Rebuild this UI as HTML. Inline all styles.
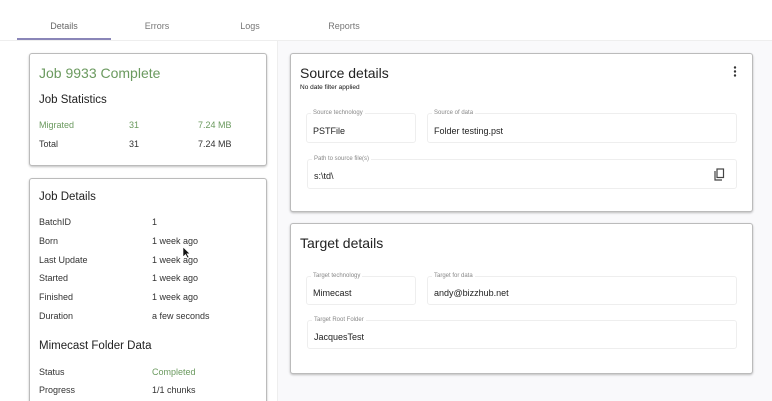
<!DOCTYPE html><html><head><style>
*{box-sizing:border-box;margin:0;padding:0}
html,body{width:772px;height:401px;overflow:hidden}
body{background:#fff;font-family:"Liberation Sans",sans-serif;color:#222;position:relative}
.a{position:absolute}
.tab{position:absolute;top:20px;font-size:9px;color:#777;text-align:center;width:94px}
.card{position:absolute;background:#fff;border:1px solid #bbb;border-radius:3px;box-shadow:0 1px 2px rgba(0,0,0,.25)}
.t{position:absolute;font-size:9px;color:#333}
.f{position:absolute;border:1px solid #eee;border-radius:3px;background:#fff}
.f .l{position:absolute;top:-4px;left:4px;font-size:6px;color:#888;background:#fff;padding:0 2px}
.f .v{position:absolute;left:6px;font-size:9px;color:#222}
</style></head><body>
<div class="a" style="left:278px;top:41px;width:494px;height:360px;background:#f9f9fb"></div>
<div class="a" style="left:0;top:40px;width:772px;height:1px;background:#eee"></div>
<div class="a" style="left:277px;top:41px;width:1px;height:360px;background:#eee"></div>
<div class="tab" style="left:17px;top:21px;color:#666">Details</div>
<div class="tab" style="left:110px;top:21px">Errors</div>
<div class="tab" style="left:203px;top:21px">Logs</div>
<div class="tab" style="left:297px;top:21px">Reports</div>
<div class="a" style="left:17px;top:38px;width:94px;height:2px;background:#8a86b8"></div>

<div class="card" style="left:29px;top:53px;width:238px;height:113px">
<div class="a" style="left:9px;top:11px;font-size:14px;color:#6b9a5f">Job 9933 Complete</div>
<div class="a" style="left:9px;top:40px;font-size:11.5px;color:#222">Job Statistics</div>
<div class="t" style="left:9px;top:66px;color:#6b9a5f">Migrated</div><div class="t" style="left:99px;top:66px;color:#6b9a5f">31</div><div class="t" style="left:168px;top:66px;color:#6b9a5f">7.24 MB</div>
<div class="t" style="left:9px;top:85px">Total</div><div class="t" style="left:99px;top:85px">31</div><div class="t" style="left:168px;top:85px">7.24 MB</div>
</div>

<div class="card" style="left:29px;top:178px;width:238px;height:240px">
<div class="a" style="left:9px;top:12px;font-size:11.5px">Job Details</div>
<div class="t" style="left:9px;top:38px">BatchID</div><div class="t" style="left:122px;top:38px">1</div>
<div class="t" style="left:9px;top:57px">Born</div><div class="t" style="left:122px;top:57px">1 week ago</div>
<div class="t" style="left:9px;top:76px">Last Update</div><div class="t" style="left:122px;top:76px">1 week ago</div>
<div class="t" style="left:9px;top:94px">Started</div><div class="t" style="left:122px;top:94px">1 week ago</div>
<div class="t" style="left:9px;top:113px">Finished</div><div class="t" style="left:122px;top:113px">1 week ago</div>
<div class="t" style="left:9px;top:132px">Duration</div><div class="t" style="left:122px;top:132px">a few seconds</div>
<div class="a" style="left:9px;top:161px;font-size:11.5px">Mimecast Folder Data</div>
<div class="t" style="left:9px;top:188px">Status</div><div class="t" style="left:122px;top:188px;color:#6b9a5f">Completed</div>
<div class="t" style="left:9px;top:206px">Progress</div><div class="t" style="left:122px;top:206px">1/1 chunks</div>
</div>
<svg class="a" style="left:182px;top:246px" width="9" height="13" viewBox="0 0 9 13"><path d="M1 1v10l2.5-2.5 2 3.5 1.5-.8-2-3.4H8z" fill="#111" stroke="#fff" stroke-width=".6"/></svg>

<div class="card" style="left:290px;top:53px;width:463px;height:159px">
<div class="a" style="left:9px;top:11px;font-size:14px;color:#222">Source details</div>
<div class="a" style="left:9px;top:30px;font-size:6.5px;color:#111">No date filter applied</div>
<svg class="a" style="left:442px;top:12px" width="4" height="11"><circle cx="2" cy="1.5" r="1.2" fill="#333"/><circle cx="2" cy="5.5" r="1.2" fill="#333"/><circle cx="2" cy="9.5" r="1.2" fill="#333"/></svg>
<div class="f" style="left:15px;top:59px;width:110px;height:30px"><span class="l">Source technology</span><span class="v" style="top:12px">PSTFile</span></div>
<div class="f" style="left:136px;top:59px;width:310px;height:30px"><span class="l">Source of data</span><span class="v" style="top:12px">Folder testing.pst</span></div>
<div class="f" style="left:16px;top:105px;width:430px;height:30px"><span class="l">Path to source file(s)</span><span class="v" style="top:11px">s:\td\</span>
<svg class="a" style="left:406px;top:8px" width="11" height="13" viewBox="0 0 11 13"><path d="M1 3v9h7" fill="none" stroke="#444" stroke-width="1.2"/><rect x="3" y="1" width="6.5" height="8.5" fill="none" stroke="#444" stroke-width="1.2"/></svg></div>
</div>

<div class="card" style="left:290px;top:223px;width:463px;height:151px">
<div class="a" style="left:9px;top:11px;font-size:14px;color:#222">Target details</div>
<div class="f" style="left:15px;top:52px;width:110px;height:29px"><span class="l">Target technology</span><span class="v" style="top:11px">Mimecast</span></div>
<div class="f" style="left:136px;top:52px;width:310px;height:29px"><span class="l">Target for data</span><span class="v" style="top:11px">andy@bizzhub.net</span></div>
<div class="f" style="left:16px;top:96px;width:430px;height:29px"><span class="l">Target Root Folder</span><span class="v" style="top:11px">JacquesTest</span></div>
</div>
</body></html>
